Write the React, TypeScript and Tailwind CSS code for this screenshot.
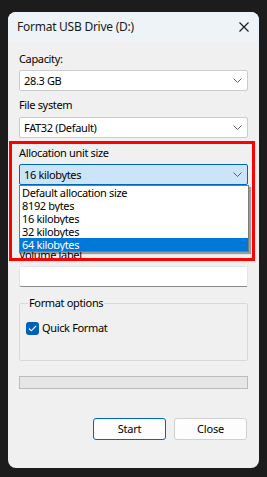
import React from "react";

const font = { fontFamily: '"Noto Sans", "Open Sans", sans-serif' };

function Chevron() {
  return (
    <svg width="9" height="5" viewBox="0 0 9 5" className="shrink-0">
      <path d="M0.5 0.5 L4.5 4.5 L8.5 0.5" fill="none" stroke="#5f5f5f" strokeWidth="1" />
    </svg>
  );
}

function Combo({ text, active }: { text: string; active?: boolean }) {
  return (
    <div
      className={
        "h-[21px] w-full flex items-center justify-between pl-[4px] pr-[5px] rounded-[2px] border " +
        (active ? "bg-[#cce4f7] border-[#0067c0]" : "bg-white border-[#cccccc]")
      }
    >
      <span className="text-[11px] tracking-[-0.35px] leading-[16px] text-black">{text}</span>
      <Chevron />
    </div>
  );
}

const lbl = "h-[16px] text-[11px] tracking-[-0.35px] leading-[16px] text-black";

export default function App() {
  const items = ["Default allocation size", "8192 bytes", "16 kilobytes", "32 kilobytes", "64 kilobytes"];
  return (
    <div className="w-[267px] h-[477px] bg-[#1c1c1c] pt-[12px] pl-[8px]" style={font}>
      <div className="relative w-[251px] h-[456px] bg-[#f0f0f0] rounded-[8px] overflow-hidden">
        <div className="h-[30px] bg-[#eef3f8] flex items-center justify-between pl-[9px] pr-[10px]">
          <span className="text-[12px] tracking-[-0.25px] text-[#1a1a1a]">Format USB Drive (D:)</span>
          <svg width="10" height="10" viewBox="0 0 10 10">
            <path d="M0.5 0.5 L9.5 9.5 M9.5 0.5 L0.5 9.5" stroke="#1a1a1a" strokeWidth="1.1" />
          </svg>
        </div>
        <div className="px-[11px]">
          <div className={"mt-[9px] " + lbl}>Capacity:</div>
          <div className="mt-[3px]"><Combo text="28.3 GB" /></div>
          <div className={"mt-[6px] " + lbl}>File system</div>
          <div className="mt-[4px]"><Combo text="FAT32 (Default)" /></div>
          <div className={"mt-[7px] " + lbl}>Allocation unit size</div>
          <div className="mt-[3px]"><Combo text="16 kilobytes" active /></div>
          <div className={"mt-[62px] " + lbl}>Volume label</div>
          <div className="mt-[3px] h-[21px] bg-white border-b border-[#8a8a8a] border-x border-t border-x-[#e5e5e5] border-t-[#e5e5e5] rounded-[2px]" />
          <div className="relative mt-[16px] h-[58px] border border-[#d9d9d9] rounded-[2px]">
            <span className="absolute left-[8px] top-[-9px] bg-[#f0f0f0] px-[1px] text-[11px] tracking-[-0.35px] leading-[16px] text-black">
              Format options
            </span>
            <div className="flex items-center mt-[16px] ml-[6px] gap-[3px]">
              <div className="w-[13px] h-[13px] rounded-[3px] bg-[#005fb8] flex items-center justify-center">
                <svg width="9" height="7" viewBox="0 0 9 7">
                  <path d="M1 3.5 L3.3 5.8 L8 1" fill="none" stroke="white" strokeWidth="1.1" />
                </svg>
              </div>
              <span className="text-[11px] tracking-[-0.35px] leading-[16px] text-black">Quick Format</span>
            </div>
          </div>
          <div className="mt-[15px] h-[13px] bg-[#e6e6e6] border border-[#bcbcbc]" />
          <div className="mt-[29px] flex justify-end gap-[8px] pr-[1px]">
            <div className="w-[73px] h-[22px] bg-[#fdfdfd] border border-[#0067c0] rounded-[3px] flex items-center justify-center text-[11px] tracking-[-0.2px] text-black">
              Start
            </div>
            <div className="w-[73px] h-[22px] bg-[#fdfdfd] border border-[#d0d0d0] rounded-[3px] flex items-center justify-center text-[11px] tracking-[-0.2px] text-black">
              Close
            </div>
          </div>
        </div>

        {/* dropdown list */}
        <div className="absolute left-[11px] top-[173px] w-[230px] bg-white border border-[#7a7a7a] shadow-[2px_2px_1px_rgba(0,0,0,0.35)]">
          {items.map((t, i) => (
            <div
              key={t}
              className={
                "h-[13px] leading-[13px] pl-[2px] text-[11px] tracking-[-0.35px] overflow-hidden " +
                (i === 4 ? "bg-[#0078d7] text-white" : "text-black")
              }
            >
              {t}
            </div>
          ))}
        </div>

        {/* red highlight */}
        <div className="absolute left-[1px] top-[129px] w-[246px] h-[120px] border-[3px] border-[#ff0000] pointer-events-none" />
      </div>
    </div>
  );
}
